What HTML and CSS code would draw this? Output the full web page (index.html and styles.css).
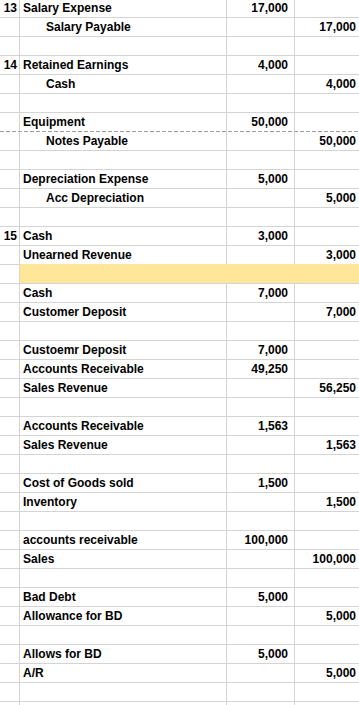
FILE: index.html
```html
<!DOCTYPE html>
<html>
<head>
  <title>Journal Entries</title>
  <link rel="stylesheet" href="styles.css">
</head>
<body>
  <div class="sheet">
    <div class="row"><div class="no">13</div><div class="acct">Salary Expense</div><div class="amt">17,000</div><div class="amt"></div></div>
    <div class="row"><div class="no"></div><div class="acct indent">Salary Payable</div><div class="amt"></div><div class="amt">17,000</div></div>
    <div class="row"><div class="no"></div><div class="acct"></div><div class="amt"></div><div class="amt"></div></div>

    <div class="row"><div class="no">14</div><div class="acct">Retained Earnings</div><div class="amt">4,000</div><div class="amt"></div></div>
    <div class="row"><div class="no"></div><div class="acct indent">Cash</div><div class="amt"></div><div class="amt">4,000</div></div>
    <div class="row"><div class="no"></div><div class="acct"></div><div class="amt"></div><div class="amt"></div></div>

    <div class="row dashed"><div class="no"></div><div class="acct">Equipment</div><div class="amt">50,000</div><div class="amt"></div></div>
    <div class="row"><div class="no"></div><div class="acct indent">Notes Payable</div><div class="amt"></div><div class="amt">50,000</div></div>
    <div class="row"><div class="no"></div><div class="acct"></div><div class="amt"></div><div class="amt"></div></div>

    <div class="row"><div class="no"></div><div class="acct">Depreciation Expense</div><div class="amt">5,000</div><div class="amt"></div></div>
    <div class="row"><div class="no"></div><div class="acct indent">Acc Depreciation</div><div class="amt"></div><div class="amt">5,000</div></div>
    <div class="row"><div class="no"></div><div class="acct"></div><div class="amt"></div><div class="amt"></div></div>

    <div class="row"><div class="no">15</div><div class="acct">Cash</div><div class="amt">3,000</div><div class="amt"></div></div>
    <div class="row before-fill"><div class="no"></div><div class="acct">Unearned Revenue</div><div class="amt"></div><div class="amt">3,000</div></div>
    <div class="row fill"><div class="no"></div><div class="acct"></div><div class="amt"></div><div class="amt"></div></div>
    <div class="row"><div class="no"></div><div class="acct">Cash</div><div class="amt">7,000</div><div class="amt"></div></div>
    <div class="row"><div class="no"></div><div class="acct">Customer Deposit</div><div class="amt"></div><div class="amt">7,000</div></div>
    <div class="row"><div class="no"></div><div class="acct"></div><div class="amt"></div><div class="amt"></div></div>

    <div class="row"><div class="no"></div><div class="acct">Custoemr Deposit</div><div class="amt">7,000</div><div class="amt"></div></div>
    <div class="row"><div class="no"></div><div class="acct">Accounts Receivable</div><div class="amt">49,250</div><div class="amt"></div></div>
    <div class="row"><div class="no"></div><div class="acct">Sales Revenue</div><div class="amt"></div><div class="amt">56,250</div></div>
    <div class="row"><div class="no"></div><div class="acct"></div><div class="amt"></div><div class="amt"></div></div>

    <div class="row"><div class="no"></div><div class="acct">Accounts Receivable</div><div class="amt">1,563</div><div class="amt"></div></div>
    <div class="row"><div class="no"></div><div class="acct">Sales Revenue</div><div class="amt"></div><div class="amt">1,563</div></div>
    <div class="row"><div class="no"></div><div class="acct"></div><div class="amt"></div><div class="amt"></div></div>

    <div class="row"><div class="no"></div><div class="acct">Cost of Goods sold</div><div class="amt">1,500</div><div class="amt"></div></div>
    <div class="row"><div class="no"></div><div class="acct">Inventory</div><div class="amt"></div><div class="amt">1,500</div></div>
    <div class="row"><div class="no"></div><div class="acct"></div><div class="amt"></div><div class="amt"></div></div>

    <div class="row"><div class="no"></div><div class="acct">accounts receivable</div><div class="amt">100,000</div><div class="amt"></div></div>
    <div class="row"><div class="no"></div><div class="acct">Sales</div><div class="amt"></div><div class="amt">100,000</div></div>
    <div class="row"><div class="no"></div><div class="acct"></div><div class="amt"></div><div class="amt"></div></div>

    <div class="row"><div class="no"></div><div class="acct">Bad Debt</div><div class="amt">5,000</div><div class="amt"></div></div>
    <div class="row"><div class="no"></div><div class="acct">Allowance for BD</div><div class="amt"></div><div class="amt">5,000</div></div>
    <div class="row"><div class="no"></div><div class="acct"></div><div class="amt"></div><div class="amt"></div></div>

    <div class="row"><div class="no"></div><div class="acct">Allows for BD</div><div class="amt">5,000</div><div class="amt"></div></div>
    <div class="row"><div class="no"></div><div class="acct">A/R</div><div class="amt"></div><div class="amt">5,000</div></div>
    <div class="row"><div class="no"></div><div class="acct"></div><div class="amt"></div><div class="amt"></div></div>
    <div class="row"><div class="no"></div><div class="acct"></div><div class="amt"></div><div class="amt"></div></div>
  </div>
</body>
</html>
```

FILE: styles.css
```css
body {
  margin: 0;
  background-color: #fff;
  font-family: "Liberation Sans", Arial, sans-serif;
  font-weight: bold;
  font-size: 12px;
  color: #000;
  overflow: hidden;
}

.sheet {
  margin-top: -1px;
  width: 363px;
}

.row {
  display: grid;
  grid-template-columns: 20px 207px 68px 68px;
  height: 19px;
}

.row > div {
  border-right: 1px solid #d4d4d4;
  border-bottom: 1px solid #d4d4d4;
  line-height: 18px;
  white-space: nowrap;
  overflow: hidden;
}

.no {
  text-align: right;
  padding-right: 2px;
}

.acct {
  padding-left: 3px;
}

.acct.indent {
  padding-left: 26px;
}

.amt {
  text-align: right;
  padding-right: 6px;
}

/* dashed bottom border, 4px dash / 2px gap like excel */
.row.dashed {
  background: repeating-linear-gradient(to right, #9c9c9c 0 4px, transparent 4px 6px) left bottom / 100% 1px no-repeat;
}

.row.dashed > div {
  border-bottom-color: transparent;
}

.row.before-fill > div:not(.no) {
  border-bottom-color: #ffe699;
}

.row.fill > div:not(.no) {
  background-color: #ffe699;
  border-right-color: #ffe699;
}
```
